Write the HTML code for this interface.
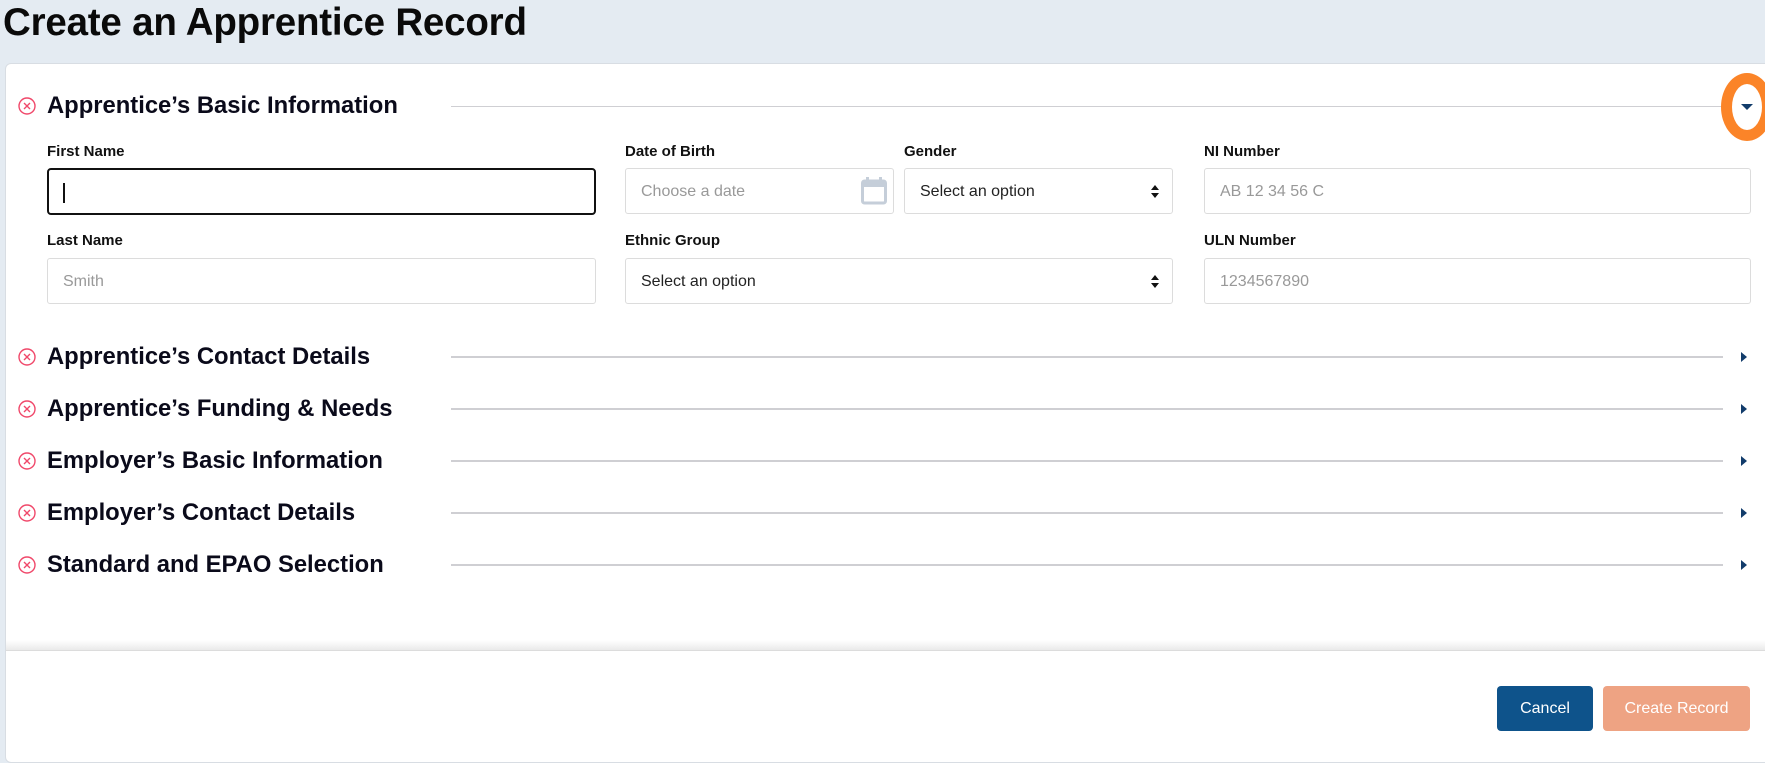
<!DOCTYPE html>
<html><head><style>
*{box-sizing:border-box;margin:0;padding:0}
body{width:1765px;height:742px;background:#e4ebf2;font-family:"Liberation Sans",Arial,sans-serif;position:relative;overflow:hidden;color:#111}
h1{position:absolute;left:3px;top:1px;font-size:38.5px;font-weight:bold;color:#0a0a0a;letter-spacing:-0.2px}
.card{position:absolute;left:5px;top:63px;width:1775px;height:700px;background:#fff;border-radius:6px;border:1px solid #d8dde3}
.a{position:absolute}
.hd{position:absolute;left:47px;font-size:23.8px;font-weight:bold;color:#0a0a1a;line-height:26px}
.ln{position:absolute;left:451px;width:1272px;height:2px;background:#cfcfd3}
.ic{position:absolute;left:18px;width:18px;height:18px}
.lb{position:absolute;font-size:15px;font-weight:bold;color:#111}
.in{position:absolute;border:1px solid #dcdcdc;border-radius:3px;height:46px;font-size:16px;color:#999;padding:0 0 0 15px;line-height:46px}
.sel{color:#222}
.ar{position:absolute;left:1741px;width:0;height:0;border-top:5px solid transparent;border-bottom:5px solid transparent;border-left:6px solid #123c6b}
.ud{position:absolute;right:13px;top:16px;width:8px;height:13px}
.btn{position:absolute;top:686px;height:45px;border-radius:4px;color:#fff;font-size:16px;text-align:center;line-height:45px}
</style></head><body>
<h1>Create an Apprentice Record</h1>
<div class="card"></div>
<svg class="ic" style="top:97px" viewBox="0 0 18 18"><circle cx="9" cy="9" r="8" fill="none" stroke="#f0486a" stroke-width="1.4"/><path d="M6 6L12 12M12 6L6 12" stroke="#f0486a" stroke-width="1.4"/></svg>
<div class="hd" style="top:93px">Apprentice’s Basic Information</div>
<div class="ln" style="top:106px;height:1px"></div>
<div class="a" style="left:1721px;top:73px;width:52px;height:68px;border:11px solid #fb8428;border-radius:50%"></div>
<div class="a" style="left:1741px;top:104px;width:0;height:0;border-left:6px solid transparent;border-right:6px solid transparent;border-top:6px solid #123c6b"></div>

<div class="lb" style="left:47px;top:143px">First Name</div>
<div class="lb" style="left:625px;top:143px">Date of Birth</div>
<div class="lb" style="left:904px;top:143px">Gender</div>
<div class="lb" style="left:1204px;top:143px">NI Number</div>
<div class="in" style="left:47px;top:168px;width:549px;height:47px;border:2px solid #111;border-radius:4px"><div class="a" style="left:14px;top:13px;width:2px;height:20px;background:#111"></div></div>
<div class="in" style="left:625px;top:168px;width:269px">Choose a date
<svg class="a" style="left:235px;top:8px" width="26" height="28" viewBox="0 0 26 28"><rect x="1.5" y="4" width="23" height="22" rx="2" fill="none" stroke="#c5ced9" stroke-width="3"/><rect x="1.5" y="4" width="23" height="6" fill="#c5ced9"/><rect x="5" y="0" width="3" height="6" fill="#c5ced9"/><rect x="18" y="0" width="3" height="6" fill="#c5ced9"/></svg></div>
<div class="in sel" style="left:904px;top:168px;width:269px">Select an option<svg class="ud" viewBox="0 0 8 13"><path d="M0 5L4 0L8 5ZM0 8L4 13L8 8Z" fill="#111"/></svg></div>
<div class="in" style="left:1204px;top:168px;width:547px">AB 12 34 56 C</div>

<div class="lb" style="left:47px;top:232px">Last Name</div>
<div class="lb" style="left:625px;top:232px">Ethnic Group</div>
<div class="lb" style="left:1204px;top:232px">ULN Number</div>
<div class="in" style="left:47px;top:258px;width:549px">Smith</div>
<div class="in sel" style="left:625px;top:258px;width:548px">Select an option<svg class="ud" viewBox="0 0 8 13"><path d="M0 5L4 0L8 5ZM0 8L4 13L8 8Z" fill="#111"/></svg></div>
<div class="in" style="left:1204px;top:258px;width:547px">1234567890</div>

<svg class="ic" style="top:348px" viewBox="0 0 18 18"><circle cx="9" cy="9" r="8" fill="none" stroke="#f0486a" stroke-width="1.4"/><path d="M6 6L12 12M12 6L6 12" stroke="#f0486a" stroke-width="1.4"/></svg>
<div class="hd" style="top:344px">Apprentice’s Contact Details</div><div class="ln" style="top:356px"></div><div class="ar" style="top:352px"></div>
<svg class="ic" style="top:400px" viewBox="0 0 18 18"><circle cx="9" cy="9" r="8" fill="none" stroke="#f0486a" stroke-width="1.4"/><path d="M6 6L12 12M12 6L6 12" stroke="#f0486a" stroke-width="1.4"/></svg>
<div class="hd" style="top:396px">Apprentice’s Funding &amp; Needs</div><div class="ln" style="top:408px"></div><div class="ar" style="top:404px"></div>
<svg class="ic" style="top:452px" viewBox="0 0 18 18"><circle cx="9" cy="9" r="8" fill="none" stroke="#f0486a" stroke-width="1.4"/><path d="M6 6L12 12M12 6L6 12" stroke="#f0486a" stroke-width="1.4"/></svg>
<div class="hd" style="top:448px">Employer’s Basic Information</div><div class="ln" style="top:460px"></div><div class="ar" style="top:456px"></div>
<svg class="ic" style="top:504px" viewBox="0 0 18 18"><circle cx="9" cy="9" r="8" fill="none" stroke="#f0486a" stroke-width="1.4"/><path d="M6 6L12 12M12 6L6 12" stroke="#f0486a" stroke-width="1.4"/></svg>
<div class="hd" style="top:500px">Employer’s Contact Details</div><div class="ln" style="top:512px"></div><div class="ar" style="top:508px"></div>
<svg class="ic" style="top:556px" viewBox="0 0 18 18"><circle cx="9" cy="9" r="8" fill="none" stroke="#f0486a" stroke-width="1.4"/><path d="M6 6L12 12M12 6L6 12" stroke="#f0486a" stroke-width="1.4"/></svg>
<div class="hd" style="top:552px">Standard and EPAO Selection</div><div class="ln" style="top:564px"></div><div class="ar" style="top:560px"></div>

<div class="a" style="left:6px;top:640px;width:1760px;height:10px;background:linear-gradient(#fff,#eaeaea)"></div>
<div class="a" style="left:6px;top:650px;width:1760px;height:1px;background:#dcdcdc"></div>
<div class="btn" style="left:1497px;width:96px;background:#0e538b">Cancel</div>
<div class="btn" style="left:1603px;width:147px;background:#eea383">Create Record</div>
</body></html>
